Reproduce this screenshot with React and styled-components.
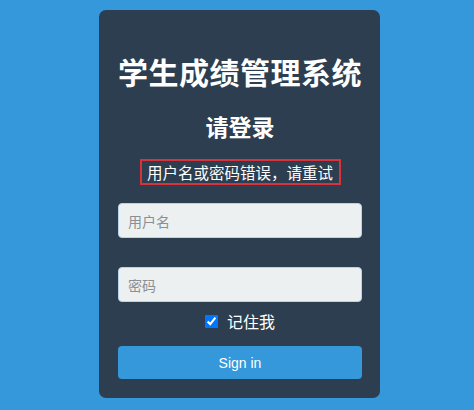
import React from 'react';
import styled, { createGlobalStyle } from 'styled-components';

const GlobalStyle = createGlobalStyle`
  html, body {
    margin: 0;
    padding: 0;
    background: #3498db;
  }
  body {
    font-family: "Liberation Sans", "Noto Sans CJK SC", sans-serif;
  }
`;

const Page = styled.div`
  height: 410px;
  box-sizing: border-box;
  padding: 10px 0 0 5px;
  display: flex;
  justify-content: center;
  align-items: flex-start;
`;

const Card = styled.form`
  width: 281px;
  box-sizing: border-box;
  background: #2c3e50;
  border-radius: 7px;
  padding: 41px 18px 19px 19px;
  display: flex;
  flex-direction: column;
  align-items: center;
`;

const Title = styled.h1`
  margin: 0;
  font-family: "Noto Sans CJK SC", sans-serif;
  font-size: 30px;
  line-height: 40px;
  font-weight: 700;
  color: #ffffff;
  letter-spacing: 0.5px;
`;

const SubTitle = styled.h2`
  margin: 20px 0 0;
  font-family: "Noto Sans CJK SC", sans-serif;
  font-size: 23px;
  line-height: 30px;
  font-weight: 700;
  color: #ffffff;
`;

const ErrorText = styled.p`
  margin: 18px 0 0;
  box-sizing: border-box;
  width: 201px;
  height: 26px;
  border: 2px solid #d8333b;
  font-family: "Noto Sans CJK SC", sans-serif;
  font-size: 15.5px;
  line-height: 22px;
  color: #ffffff;
  text-align: center;
`;

const Input = styled.input`
  margin-top: ${p => p.$gap}px;
  width: 100%;
  height: 35px;
  box-sizing: border-box;
  padding: 0 9px;
  border: 1px solid #b9d4ea;
  border-radius: 4px;
  background: #ecf0f1;
  font-family: "Noto Sans CJK SC", sans-serif;
  font-size: 14px;
  color: #333;
  outline: none;

  &::placeholder {
    color: #8a8f93;
  }
`;

const Remember = styled.label`
  margin-top: 9px;
  display: flex;
  align-items: center;
  gap: 9px;
  height: 20px;
  font-family: "Noto Sans CJK SC", sans-serif;
  font-size: 16px;
  color: #ffffff;

  input {
    margin: 0;
    width: 13px;
    height: 13px;
  }
`;

const Button = styled.button`
  margin-top: 15px;
  width: 100%;
  height: 33px;
  border: none;
  border-radius: 4px;
  background: #3498db;
  color: #ffffff;
  font-family: "Liberation Sans", sans-serif;
  font-size: 14px;
  cursor: pointer;
`;

const App = () => {
  return (
    <>
      <GlobalStyle />
      <Page>
        <Card onSubmit={e => e.preventDefault()}>
          <Title>学生成绩管理系统</Title>
          <SubTitle>请登录</SubTitle>
          <ErrorText>用户名或密码错误，请重试</ErrorText>
          <Input $gap={18} type="text" placeholder="用户名" />
          <Input $gap={29} type="password" placeholder="密码" />
          <Remember>
            <input type="checkbox" defaultChecked />
            记住我
          </Remember>
          <Button type="submit">Sign in</Button>
        </Card>
      </Page>
    </>
  );
};

export default App;
